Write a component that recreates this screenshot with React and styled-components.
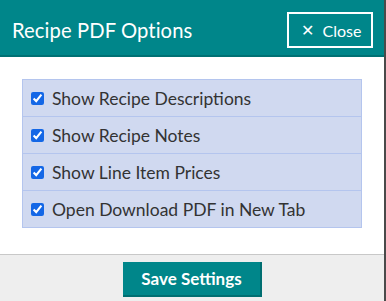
import React, { useState } from 'react'
import styled, { createGlobalStyle } from 'styled-components'

const GlobalStyle = createGlobalStyle`
  html, body {
    margin: 0;
    padding: 0;
    background: #4a4a4a;
    font-family: Lato, "Open Sans", sans-serif;
  }
`

const Modal = styled.div`
  width: 384px;
  height: 301px;
  display: flex;
  flex-direction: column;
  background: #fff;
  overflow: hidden;
`

const Header = styled.div`
  height: 57px;
  box-sizing: border-box;
  display: flex;
  align-items: center;
  justify-content: space-between;
  padding: 5px 11px 0 12px;
  background: #00868a;
  border-bottom: 2px solid #007174;
`

const Title = styled.h1`
  margin: 0;
  color: #fff;
  font-size: 20.2px;
  font-weight: 400;
  letter-spacing: 0.1px;
`

const CloseButton = styled.button`
  width: 86px;
  height: 36px;
  box-sizing: border-box;
  display: flex;
  align-items: center;
  justify-content: center;
  gap: 9px;
  background: transparent;
  border: 2px solid #fff;
  color: #fff;
  font-family: inherit;
  font-size: 16px;
  padding: 0 0 0 2px;
  cursor: pointer;
`

const Body = styled.div`
  flex: 0 0 auto;
  padding: 22px 22px 26px;
`

const OptionList = styled.div`
  border: 1px solid #b4c5ee;
  background: #d0d9f0;
`

const Option = styled.label`
  height: 36px;
  display: flex;
  align-items: center;
  padding-left: 7px;
  color: #333;
  font-size: 17.5px;
  border-top: ${(p) => (p.first ? 'none' : '1px solid #b4c5ee')};
`

const Check = styled.input`
  width: 13px;
  height: 13px;
  margin: 0 8px 0 1px;
  accent-color: #1467e6;
`

const Footer = styled.div`
  flex: 1;
  display: flex;
  justify-content: center;
  align-items: flex-start;
  padding-top: 7px;
  background: #eeeeee;
  border-top: 1px solid #c8c8c8;
`

const SaveButton = styled.button`
  width: 139px;
  height: 35px;
  box-sizing: border-box;
  background: #00868a;
  border: none;
  border-right: 2px solid #006e71;
  border-bottom: 2px solid #006e71;
  color: #fff;
  font-family: inherit;
  font-size: 17px;
  font-weight: 700;
  padding: 0 0 0 1px;
  cursor: pointer;
`

const options = [
  'Show Recipe Descriptions',
  'Show Recipe Notes',
  'Show Line Item Prices',
  'Open Download PDF in New Tab',
]

export default function App() {
  const [checked, setChecked] = useState(options.map(() => true))

  const toggle = (i) =>
    setChecked((c) => c.map((v, j) => (j === i ? !v : v)))

  return (
    <>
      <GlobalStyle />
      <Modal>
        <Header>
          <Title>Recipe PDF Options</Title>
          <CloseButton>
            <span>✕</span>
            <span>Close</span>
          </CloseButton>
        </Header>
        <Body>
          <OptionList>
            {options.map((label, i) => (
              <Option key={label} first={i === 0}>
                <Check
                  type='checkbox'
                  checked={checked[i]}
                  onChange={() => toggle(i)}
                />
                {label}
              </Option>
            ))}
          </OptionList>
        </Body>
        <Footer>
          <SaveButton>Save Settings</SaveButton>
        </Footer>
      </Modal>
    </>
  )
}
